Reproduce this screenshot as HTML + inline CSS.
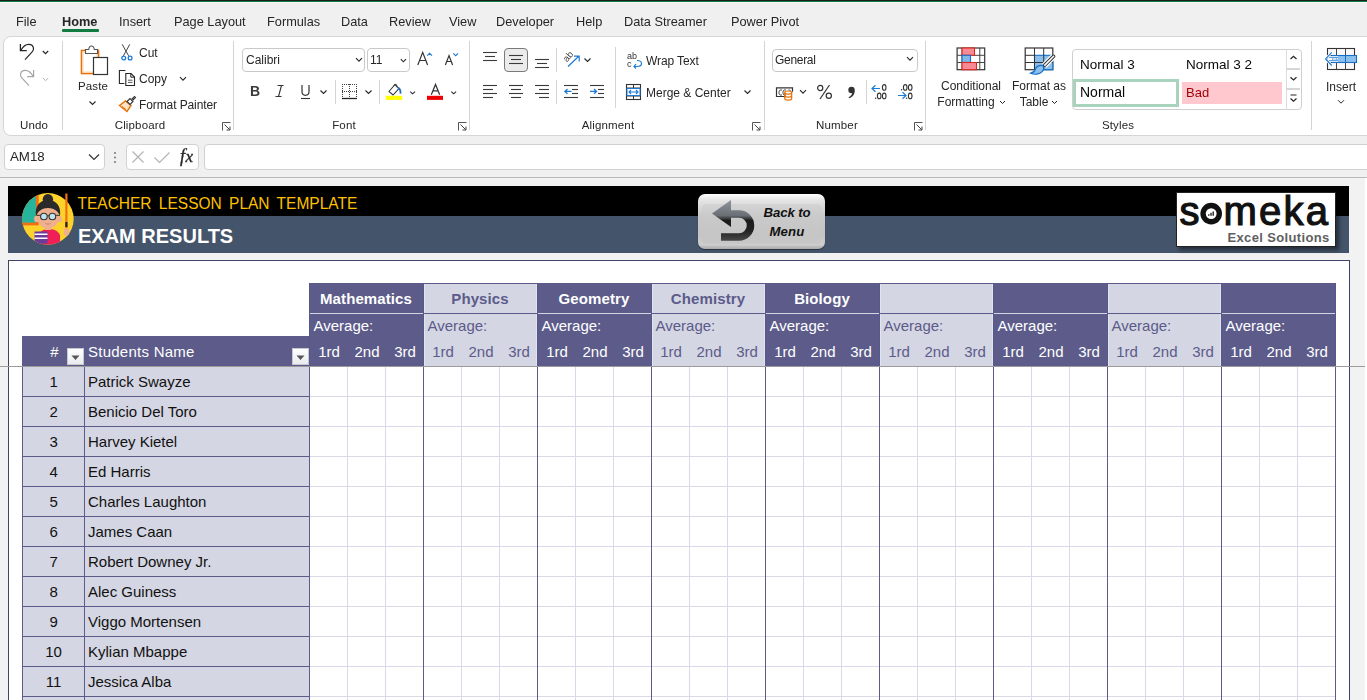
<!DOCTYPE html><html><head><meta charset="utf-8"><style>
html,body{margin:0;padding:0;}
body{width:1367px;height:700px;overflow:hidden;position:relative;background:#f0f0f0;font-family:"Liberation Sans",sans-serif;}
.t{position:absolute;white-space:nowrap;}
.r{position:absolute;}
.g{will-change:transform;}
</style></head><body>
<div class="r" style="left:0px;top:0px;width:1367px;height:1px;background:#1c1b20;"></div>
<div class="r" style="left:0px;top:1px;width:1367px;height:1px;background:#0f7b3e;"></div>
<div class="r" style="left:0px;top:2px;width:1367px;height:1px;background:#f9f6f9;"></div>
<div class="t g" style="left:16px;top:15.51px;font-size:12.75px;line-height:12.75px;color:#262626;">File</div>
<div class="t g" style="left:62px;top:15.51px;font-size:12.75px;line-height:12.75px;color:#262626;font-weight:bold;">Home</div>
<div class="t g" style="left:119px;top:15.51px;font-size:12.75px;line-height:12.75px;color:#262626;">Insert</div>
<div class="t g" style="left:174px;top:15.51px;font-size:12.75px;line-height:12.75px;color:#262626;">Page Layout</div>
<div class="t g" style="left:267px;top:15.51px;font-size:12.75px;line-height:12.75px;color:#262626;">Formulas</div>
<div class="t g" style="left:341px;top:15.51px;font-size:12.75px;line-height:12.75px;color:#262626;">Data</div>
<div class="t g" style="left:389px;top:15.51px;font-size:12.75px;line-height:12.75px;color:#262626;">Review</div>
<div class="t g" style="left:449px;top:15.51px;font-size:12.75px;line-height:12.75px;color:#262626;">View</div>
<div class="t g" style="left:496px;top:15.51px;font-size:12.75px;line-height:12.75px;color:#262626;">Developer</div>
<div class="t g" style="left:576px;top:15.51px;font-size:12.75px;line-height:12.75px;color:#262626;">Help</div>
<div class="t g" style="left:624px;top:15.51px;font-size:12.75px;line-height:12.75px;color:#262626;">Data Streamer</div>
<div class="t g" style="left:731px;top:15.51px;font-size:12.75px;line-height:12.75px;color:#262626;">Power Pivot</div>
<div class="r" style="left:62px;top:29px;width:37px;height:3px;background:#107c41;border-radius:1px;"></div>
<div class="r" style="left:3px;top:36px;width:1380px;height:100px;background:#ffffff;border:1px solid #d6d6d6;border-radius:8px;box-sizing:border-box;"></div>
<div class="r" style="left:62px;top:41px;width:1px;height:89px;background:#d4d4d4;"></div>
<div class="r" style="left:233px;top:41px;width:1px;height:89px;background:#d4d4d4;"></div>
<div class="r" style="left:469px;top:41px;width:1px;height:89px;background:#d4d4d4;"></div>
<div class="r" style="left:763.5px;top:41px;width:1px;height:89px;background:#d4d4d4;"></div>
<div class="r" style="left:925px;top:41px;width:1px;height:89px;background:#d4d4d4;"></div>
<div class="r" style="left:1311px;top:41px;width:1px;height:89px;background:#d4d4d4;"></div>
<div class="t g" style="left:34px;top:120.17px;font-size:11.5px;line-height:11.5px;color:#262626;letter-spacing:0.15px;width:120px;margin-left:-60.0px;text-align:center;">Undo</div>
<div class="t g" style="left:139.5px;top:120.17px;font-size:11.5px;line-height:11.5px;color:#262626;letter-spacing:0.15px;width:120px;margin-left:-60.0px;text-align:center;">Clipboard</div>
<div class="t g" style="left:343.5px;top:120.17px;font-size:11.5px;line-height:11.5px;color:#262626;letter-spacing:0.15px;width:120px;margin-left:-60.0px;text-align:center;">Font</div>
<div class="t g" style="left:608px;top:120.17px;font-size:11.5px;line-height:11.5px;color:#262626;letter-spacing:0.15px;width:120px;margin-left:-60.0px;text-align:center;">Alignment</div>
<div class="t g" style="left:836.5px;top:120.17px;font-size:11.5px;line-height:11.5px;color:#262626;letter-spacing:0.15px;width:120px;margin-left:-60.0px;text-align:center;">Number</div>
<div class="t g" style="left:1118px;top:120.17px;font-size:11.5px;line-height:11.5px;color:#262626;letter-spacing:0.15px;width:120px;margin-left:-60.0px;text-align:center;">Styles</div>
<svg class="r" style="left:222px;top:122px;" width="9" height="9" viewBox="0 0 9 9"><path d="M0.5 8.5V0.5H8.5" fill="none" stroke="#555" stroke-width="1"/><path d="M2.5 2.5L8 8M8 4.5V8H4.5" fill="none" stroke="#444" stroke-width="1"/></svg>
<svg class="r" style="left:458px;top:122px;" width="9" height="9" viewBox="0 0 9 9"><path d="M0.5 8.5V0.5H8.5" fill="none" stroke="#555" stroke-width="1"/><path d="M2.5 2.5L8 8M8 4.5V8H4.5" fill="none" stroke="#444" stroke-width="1"/></svg>
<svg class="r" style="left:752px;top:122px;" width="9" height="9" viewBox="0 0 9 9"><path d="M0.5 8.5V0.5H8.5" fill="none" stroke="#555" stroke-width="1"/><path d="M2.5 2.5L8 8M8 4.5V8H4.5" fill="none" stroke="#444" stroke-width="1"/></svg>
<svg class="r" style="left:914px;top:122px;" width="9" height="9" viewBox="0 0 9 9"><path d="M0.5 8.5V0.5H8.5" fill="none" stroke="#555" stroke-width="1"/><path d="M2.5 2.5L8 8M8 4.5V8H4.5" fill="none" stroke="#444" stroke-width="1"/></svg>
<svg class="r" style="left:18px;top:42px;" width="20" height="20" viewBox="0 0 20 20"><path d="M2.4 2v6.7h6.4" fill="none" stroke="#262626" stroke-width="1.3"/><path d="M2.8 8.4C5 4.5 7.5 2.3 10.5 2.3c3 0 5 2 5 4.6 0 1.8-1.2 3-2.5 4.3L7 17.6" fill="none" stroke="#262626" stroke-width="1.2"/></svg>
<svg class="r" style="left:42px;top:50px;" width="7" height="5" viewBox="0 0 7 5"><path d="M0.8 1l2.7 2.7L6.2 1" fill="none" stroke="#262626" stroke-width="1.2"/></svg>
<svg class="r" style="left:16px;top:68px;" width="20" height="20" viewBox="0 0 20 20"><path d="M17.6 2v6.7h-6.4" fill="none" stroke="#a6a6a6" stroke-width="1.2"/><path d="M17.2 8.4C15 4.5 12.5 2.3 9.5 2.3c-3 0-5 2-5 4.6 0 1.8 1.2 3 2.5 4.3L13 17.6" fill="none" stroke="#a6a6a6" stroke-width="1.2"/></svg>
<svg class="r" style="left:42px;top:77px;" width="7" height="5" viewBox="0 0 7 5"><path d="M0.8 1l2.7 2.7L6.2 1" fill="none" stroke="#b0b0b0" stroke-width="1"/></svg>
<svg class="r" style="left:80px;top:44px;" width="30" height="32" viewBox="0 0 30 32"><rect x="1.5" y="6.5" width="17" height="23" fill="#fff" stroke="#e8700a" stroke-width="1.6"/><rect x="3" y="8" width="14" height="20" fill="#fff" stroke="#fbd6a8" stroke-width="1"/><path d="M5.5 9.5V5.5h3.2c0.3-2.5 1.5-3.5 2.8-3.5s2.5 1 2.8 3.5h3.2v4z" fill="#fff" stroke="#555" stroke-width="1.1"/><rect x="13.5" y="13.5" width="14" height="17" fill="#fff" stroke="#333" stroke-width="1.2"/></svg>
<div class="t g" style="left:92.5px;top:81.07px;font-size:11.5px;line-height:11.5px;color:#262626;letter-spacing:0.1px;width:60px;margin-left:-30.0px;text-align:center;">Paste</div>
<svg class="r" style="left:88px;top:100px;" width="9" height="6" viewBox="0 0 9 6"><path d="M1.5 1.5l3 3 3-3" fill="none" stroke="#262626" stroke-width="1.1"/></svg>
<svg class="r" style="left:119px;top:43px;" width="16" height="18" viewBox="0 0 16 18"><path d="M3.2 1.3L9.6 12.8M10.8 1.3L4.4 12.8" fill="none" stroke="#444" stroke-width="1"/><circle cx="4.7" cy="15" r="1.9" fill="none" stroke="#1e7ad6" stroke-width="1.3"/><circle cx="11.1" cy="15" r="1.9" fill="none" stroke="#1e7ad6" stroke-width="1.3"/></svg>
<div class="t g" style="left:139px;top:46.84px;font-size:12px;line-height:12px;color:#262626;">Cut</div>
<svg class="r" style="left:118px;top:69px;" width="19" height="19" viewBox="0 0 19 19"><path d="M7.5 1.5H1.4V14.5h5" fill="none" stroke="#262626" stroke-width="1.1"/><path d="M7.8 4.5h5.2l3.5 3.5V16.5H7.8z" fill="#fff" stroke="#262626" stroke-width="1.1"/><path d="M12.8 4.5v3.7h3.7" fill="none" stroke="#262626" stroke-width="1"/><path d="M10 11.2h4.5M10 13.4h4.5" stroke="#444" stroke-width="0.9"/></svg>
<div class="t g" style="left:139px;top:73.14px;font-size:12px;line-height:12px;color:#262626;">Copy</div>
<svg class="r" style="left:179px;top:76px;" width="8" height="6" viewBox="0 0 8 6"><path d="M1 1.2l3 3 3-3" fill="none" stroke="#262626" stroke-width="1.1"/></svg>
<svg class="r" style="left:118px;top:95px;" width="19" height="18" viewBox="0 0 19 18"><path d="M1.5 10.5L9 16.5l4-6-5.5-4.5z" fill="#fde3c5" stroke="#e8700a" stroke-width="1.4"/><path d="M4 11.5l4 3" stroke="#e8700a" stroke-width="1"/><path d="M9 6.5l3-3 3 3-3 3z" fill="#fff" stroke="#333" stroke-width="1.1"/><path d="M13.5 4.5l3-3 1 1-3 3" fill="#fff" stroke="#333" stroke-width="1.1"/></svg>
<div class="t g" style="left:139px;top:99.04px;font-size:12px;line-height:12px;color:#262626;letter-spacing:-0.1px;">Format Painter</div>
<div class="r" style="left:242px;top:48px;width:123px;height:24px;background:#fff;border:1px solid #c9c9c9;border-radius:4px;box-sizing:border-box;"></div>
<div class="t g" style="left:245.5px;top:53.64px;font-size:12px;line-height:12px;color:#262626;">Calibri</div>
<svg class="r" style="left:355px;top:56.5px;" width="8" height="6" viewBox="0 0 8 6"><path d="M1 1.2l3 3 3-3" fill="none" stroke="#262626" stroke-width="1.1"/></svg>
<div class="r" style="left:367px;top:48px;width:43px;height:24px;background:#fff;border:1px solid #c9c9c9;border-radius:4px;box-sizing:border-box;"></div>
<div class="t g" style="left:370px;top:53.64px;font-size:12px;line-height:12px;color:#262626;">11</div>
<svg class="r" style="left:380px;top:40px;" width="90" height="66" viewBox="0 0 90 66"><path d="M400.8 59.2L403.4 61.8L406 59.2" fill="none" stroke="#262626" stroke-width="1.1" transform="translate(-380 -40)"/><path d="M417.8 65L422.7 52.3L427.6 65M419.6 60.5h6.2" fill="none" stroke="#333" stroke-width="1.2" transform="translate(-380 -40)"/><path d="M427.2 55.6L429.6 53.3L432 55.6" fill="none" stroke="#1e7ad6" stroke-width="1.1" transform="translate(-380 -40)"/><path d="M445.4 65L449 55.6L452.6 65M446.8 61.5h4.4" fill="none" stroke="#333" stroke-width="1.2" transform="translate(-380 -40)"/><path d="M453.3 53.4L455.7 55.7L458.1 53.4" fill="none" stroke="#1e7ad6" stroke-width="1.1" transform="translate(-380 -40)"/><path d="M389 91.5L395 84.5L399 88.5L393 95z" fill="#fff" stroke="#333" stroke-width="1.1" transform="translate(-380 -40)"/><path d="M393.8 85.8c0.5-1.3 1.8-1.8 2.6-1.2c0.6 0.5 0.4 1.6-0.3 2.6" fill="none" stroke="#333" stroke-width="1" transform="translate(-380 -40)"/><path d="M398 87.8c1.8 0.6 2.7 2.3 2.5 5.8" fill="none" stroke="#1e6bc0" stroke-width="1.8" transform="translate(-380 -40)"/><rect x="5.8" y="55.8" width="16.4" height="4.1" fill="#ffff00"/><path d="M410.2 91.6L412.6 93.8L415 91.6" fill="none" stroke="#262626" stroke-width="1.1" transform="translate(-380 -40)"/><path d="M431.3 94.7L435.5 84.4L439.7 94.7M432.8 90.8h5.4" fill="none" stroke="#333" stroke-width="1.2" transform="translate(-380 -40)"/><rect x="47" y="55.8" width="16" height="4.1" fill="#ee0000"/><path d="M451.3 91.6L453.7 93.8L456.1 91.6" fill="none" stroke="#262626" stroke-width="1.1" transform="translate(-380 -40)"/></svg>
<div class="t g" style="left:249.5px;top:84.45px;font-size:14px;line-height:14px;color:#3a3a3a;font-weight:bold;">B</div>
<svg class="r" style="left:274px;top:84px;" width="12" height="14" viewBox="0 0 12 14"><path d="M3.5 1.5h6M1.5 12.5h6M7.5 1.5l-3 11" fill="none" stroke="#333" stroke-width="1.1"/></svg>
<svg class="r" style="left:299px;top:83px;" width="13" height="18" viewBox="0 0 13 18"><path d="M3 2v6.5c0 2.4 1.5 3.8 3.5 3.8s3.5-1.4 3.5-3.8V2" fill="none" stroke="#333" stroke-width="1.2"/><path d="M2 15.5h9" stroke="#333" stroke-width="1.1"/></svg>
<svg class="r" style="left:319px;top:89px;" width="9" height="6" viewBox="0 0 9 6"><path d="M1.5 1.5l3 3 3-3" fill="none" stroke="#262626" stroke-width="1.1"/></svg>
<div class="r" style="left:335px;top:80px;width:1px;height:24px;background:#d4d4d4;"></div>
<svg class="r" style="left:341px;top:83px;" width="17" height="18" viewBox="0 0 17 18"><path d="M1 1.5h15M1 8.5h15M1.5 1v15M8.5 1v15M15.5 1v15" fill="none" stroke="#444" stroke-width="1" stroke-dasharray="1 1"/><path d="M1 15.5h15" stroke="#222" stroke-width="1.3"/></svg>
<svg class="r" style="left:364px;top:89px;" width="9" height="6" viewBox="0 0 9 6"><path d="M1.5 1.5l3 3 3-3" fill="none" stroke="#262626" stroke-width="1.1"/></svg>
<div class="r" style="left:379px;top:80px;width:1px;height:24px;background:#d4d4d4;"></div>
<div class="r" style="left:504px;top:48px;width:24px;height:24px;background:#ebebeb;border:1px solid #7a7a7a;border-radius:4px;box-sizing:border-box;"></div>
<svg class="r" style="left:475px;top:42px;" width="140" height="64" viewBox="0 0 140 64"><path d="M8 10.5H22" stroke="#3b3b3b" stroke-width="1.1"/><path d="M10 14.5H20" stroke="#3b3b3b" stroke-width="1.1"/><path d="M8 18.5H22" stroke="#3b3b3b" stroke-width="1.1"/><path d="M34 13.5H48" stroke="#3b3b3b" stroke-width="1.1"/><path d="M36 17.5H46" stroke="#3b3b3b" stroke-width="1.1"/><path d="M34 21.5H48" stroke="#3b3b3b" stroke-width="1.1"/><path d="M60 17.5H74" stroke="#3b3b3b" stroke-width="1.1"/><path d="M62 21.5H72" stroke="#3b3b3b" stroke-width="1.1"/><path d="M60 25.5H74" stroke="#3b3b3b" stroke-width="1.1"/><path d="M8 43.5H22" stroke="#3b3b3b" stroke-width="1.1"/><path d="M8 47.5H18" stroke="#3b3b3b" stroke-width="1.1"/><path d="M8 51.5H22" stroke="#3b3b3b" stroke-width="1.1"/><path d="M8 55.5H18" stroke="#3b3b3b" stroke-width="1.1"/><path d="M34 43.5H48" stroke="#3b3b3b" stroke-width="1.1"/><path d="M36 47.5H46" stroke="#3b3b3b" stroke-width="1.1"/><path d="M34 51.5H48" stroke="#3b3b3b" stroke-width="1.1"/><path d="M36 55.5H46" stroke="#3b3b3b" stroke-width="1.1"/><path d="M60 43.5H74" stroke="#3b3b3b" stroke-width="1.1"/><path d="M64 47.5H74" stroke="#3b3b3b" stroke-width="1.1"/><path d="M60 51.5H74" stroke="#3b3b3b" stroke-width="1.1"/><path d="M64 55.5H74" stroke="#3b3b3b" stroke-width="1.1"/><path d="M89 43.5H103" stroke="#3b3b3b" stroke-width="1.1"/><path d="M97 47.5H103" stroke="#3b3b3b" stroke-width="1.1"/><path d="M97 51.5H103" stroke="#3b3b3b" stroke-width="1.1"/><path d="M89 55.5H103" stroke="#3b3b3b" stroke-width="1.1"/><path d="M115 43.5H129" stroke="#3b3b3b" stroke-width="1.1"/><path d="M123 47.5H129" stroke="#3b3b3b" stroke-width="1.1"/><path d="M123 51.5H129" stroke="#3b3b3b" stroke-width="1.1"/><path d="M115 55.5H129" stroke="#3b3b3b" stroke-width="1.1"/><path d="M90 49.4h6.5M92.5 47l-2.6 2.4 2.6 2.4" fill="none" stroke="#1e7ad6" stroke-width="1.3"/><path d="M115 49.4h6.5M119 47l2.6 2.4-2.6 2.4" fill="none" stroke="#1e7ad6" stroke-width="1.3"/><text x="0" y="0" font-size="9.5" font-family="Liberation Sans" fill="#3b3b3b" transform="translate(92 20.5) rotate(-50)">ab</text><path d="M93 24.5L104 14M99 14.2h5.2v5.2" fill="none" stroke="#1e7ad6" stroke-width="1.2"/></svg>
<svg class="r" style="left:583px;top:57px;" width="9" height="6" viewBox="0 0 9 6"><path d="M1.5 1.5l3 3 3-3" fill="none" stroke="#262626" stroke-width="1.1"/></svg>
<div class="r" style="left:556px;top:48px;width:1px;height:24px;background:#d4d4d4;"></div>
<div class="r" style="left:556px;top:80px;width:1px;height:24px;background:#d4d4d4;"></div>
<div class="r" style="left:615px;top:47px;width:1px;height:61px;background:#d4d4d4;"></div>
<svg class="r" style="left:626px;top:51px;" width="18" height="18" viewBox="0 0 18 18"><text x="1" y="8" font-size="9" font-family="Liberation Sans" fill="#333">ab</text><text x="1" y="16" font-size="9" font-family="Liberation Sans" fill="#333">c</text><path d="M11 9.5c3 0 4.5 1 4.5 3s-1.5 3-4.5 3H8M10 13l-2 2.5 2 2" fill="none" stroke="#1e7ad6" stroke-width="1.2"/></svg>
<div class="t g" style="left:646px;top:55.14px;font-size:12px;line-height:12px;color:#262626;letter-spacing:-0.1px;">Wrap Text</div>
<svg class="r" style="left:625px;top:83px;" width="18" height="18" viewBox="0 0 18 18"><rect x="1.5" y="1.5" width="14" height="15" fill="#fff" stroke="#333" stroke-width="1.1"/><path d="M1.5 5h14M1.5 13h14" stroke="#333" stroke-width="1"/><path d="M8.5 1.5v3.5M8.5 13v3.5" stroke="#333" stroke-width="1"/><rect x="2" y="5.5" width="13" height="7" fill="#fff" stroke="#1e7ad6" stroke-width="1"/><path d="M4 9h9M6 7l-2 2 2 2M11 7l2 2-2 2" fill="none" stroke="#1e7ad6" stroke-width="1.1"/></svg>
<div class="t g" style="left:646px;top:86.64px;font-size:12px;line-height:12px;color:#262626;letter-spacing:0px;">Merge &amp; Center</div>
<svg class="r" style="left:743px;top:89px;" width="9" height="6" viewBox="0 0 9 6"><path d="M1.5 1.5l3 3 3-3" fill="none" stroke="#262626" stroke-width="1.1"/></svg>
<div class="r" style="left:772px;top:48.5px;width:146px;height:23px;background:#fff;border:1px solid #c9c9c9;border-radius:4px;box-sizing:border-box;"></div>
<div class="t g" style="left:775px;top:53.74px;font-size:12px;line-height:12px;color:#262626;letter-spacing:-0.3px;">General</div>
<svg class="r" style="left:906px;top:56px;" width="8" height="6" viewBox="0 0 8 6"><path d="M1 1.2l3 3 3-3" fill="none" stroke="#262626" stroke-width="1.1"/></svg>
<svg class="r" style="left:774px;top:84px;" width="22" height="18" viewBox="0 0 22 18"><path d="M11 12.5H2.5V3.8h16v4" fill="none" stroke="#333" stroke-width="1.2"/><path d="M8 6.2c-1-0.6-3-0.5-3 2.3s2 2.9 3 2.3M12 6.2c-1-0.6-3-0.5-3 2.3s2 2.9 3 2.3" fill="none" stroke="#333" stroke-width="1"/><path d="M14.5 6c1 0 2 0.3 2 1" fill="none" stroke="#333" stroke-width="0.9"/><ellipse cx="14.2" cy="8.6" rx="3.5" ry="1.6" fill="#fff" stroke="#e8700a" stroke-width="1.2"/><path d="M10.7 8.6v5.9c0 0.9 1.6 1.6 3.5 1.6s3.5-0.7 3.5-1.6V8.6M10.7 11.5c0 0.9 1.6 1.6 3.5 1.6s3.5-0.7 3.5-1.6" fill="none" stroke="#e8700a" stroke-width="1.2"/></svg>
<svg class="r" style="left:799px;top:89px;" width="9" height="6" viewBox="0 0 9 6"><path d="M1 1.2l3 3 3-3" fill="none" stroke="#262626" stroke-width="1.1"/></svg>
<svg class="r" style="left:816px;top:84px;" width="18" height="16" viewBox="0 0 18 16"><circle cx="4.2" cy="4" r="2.6" fill="none" stroke="#333" stroke-width="1.2"/><circle cx="12.8" cy="11.8" r="2.6" fill="none" stroke="#333" stroke-width="1.2"/><path d="M13.5 1L4 15" stroke="#333" stroke-width="1.2"/></svg>
<svg class="r" style="left:845px;top:85px;" width="12" height="15" viewBox="0 0 12 15"><circle cx="6.5" cy="5" r="3.2" fill="#333"/><path d="M9.6 5.5c0.3 3.5-1.8 6.5-5.5 7.8l-0.5-1c2.5-1.2 3.8-3.3 3.8-5.5z" fill="#333"/></svg>
<div class="r" style="left:865.5px;top:80px;width:1px;height:24px;background:#d4d4d4;"></div>
<svg class="r" style="left:869px;top:84px;" width="21" height="18" viewBox="0 0 21 18"><path d="M3 4.5h8M6.5 1.3L3 4.5l3.5 3.2" fill="none" stroke="#1e7ad6" stroke-width="1.2"/><ellipse cx="15.2" cy="3.4" rx="1.8" ry="2.8" fill="none" stroke="#333" stroke-width="1.1"/><circle cx="6.6" cy="14.2" r="0.75" fill="#333"/><ellipse cx="10.2" cy="11.9" rx="1.8" ry="2.8" fill="none" stroke="#333" stroke-width="1.1"/><ellipse cx="15.2" cy="11.9" rx="1.8" ry="2.8" fill="none" stroke="#333" stroke-width="1.1"/></svg>
<svg class="r" style="left:895px;top:84px;" width="21" height="18" viewBox="0 0 21 18"><circle cx="6.6" cy="5.7" r="0.75" fill="#333"/><ellipse cx="10.2" cy="3.4" rx="1.8" ry="2.8" fill="none" stroke="#333" stroke-width="1.1"/><ellipse cx="15.2" cy="3.4" rx="1.8" ry="2.8" fill="none" stroke="#333" stroke-width="1.1"/><path d="M3 11.5h8M7.5 8.3L11 11.5l-3.5 3.2" fill="none" stroke="#1e7ad6" stroke-width="1.2"/><circle cx="11.6" cy="14.2" r="0.75" fill="#333"/><ellipse cx="15.2" cy="11.9" rx="1.8" ry="2.8" fill="none" stroke="#333" stroke-width="1.1"/></svg>
<svg class="r" style="left:956px;top:47px;" width="30" height="26" viewBox="0 0 30 26"><rect x="1.1" y="1" width="27.6" height="21.7" fill="#fff" stroke="#333" stroke-width="1.2"/><path d="M1.1 8.3h27.6M1.1 15.5h27.6M23.8 1v21.7M6 1v21.7" fill="none" stroke="#444" stroke-width="1"/><rect x="6" y="1" width="12.5" height="7.3" fill="#f78b95" stroke="#e0261b" stroke-width="1.1"/><rect x="6" y="8.3" width="8.5" height="7.2" fill="#82b8e8" stroke="#1670c9" stroke-width="1.1"/><rect x="6" y="15.5" width="14.5" height="7.2" fill="#f78b95" stroke="#e0261b" stroke-width="1.1"/></svg>
<div class="t g" style="left:971px;top:79.84px;font-size:12px;line-height:12px;color:#262626;width:80px;margin-left:-40.0px;text-align:center;">Conditional</div>
<div class="t g" style="left:966px;top:96.04px;font-size:12px;line-height:12px;color:#262626;width:80px;margin-left:-40.0px;text-align:center;">Formatting</div>
<svg class="r" style="left:998.5px;top:99.5px;" width="7" height="5" viewBox="0 0 7 5"><path d="M1 1l2.5 2.5L6 1" fill="none" stroke="#262626" stroke-width="1"/></svg>
<svg class="r" style="left:1024px;top:47px;" width="34" height="33" viewBox="0 0 34 33"><rect x="1.2" y="1" width="27.6" height="21.7" fill="#fff" stroke="#333" stroke-width="1.2"/><rect x="10.5" y="8.3" width="18.3" height="14.4" fill="#8cc0ec" stroke="#1670c9" stroke-width="1.1"/><path d="M1.2 8.3h9.3M1.2 15.5h27.6M10.5 1v21.7M19.7 1v21.7" fill="none" stroke="#333" stroke-width="1"/><path d="M20.3 18.6L29.6 9.3" stroke="#fff" stroke-width="6"/><path d="M20.8 18.1L29.6 9.3" stroke="#333" stroke-width="3.6" stroke-linecap="round"/><path d="M20.8 18.1L29.6 9.3" stroke="#fff" stroke-width="1.6" stroke-linecap="round"/><path d="M19.2 19c-3 -1.5 -7 0 -8 3.5c-0.6 2 -2.5 3.3 -4.5 3.7c3.5 1.8 9 1.2 11.5 -1.5c1.5 -1.6 2 -3.7 1 -5.7z" fill="#8cc0ec" stroke="#1670c9" stroke-width="1.2"/></svg>
<div class="t g" style="left:1039px;top:79.84px;font-size:12px;line-height:12px;color:#262626;width:80px;margin-left:-40.0px;text-align:center;">Format as</div>
<div class="t g" style="left:1033.5px;top:96.04px;font-size:12px;line-height:12px;color:#262626;width:60px;margin-left:-30.0px;text-align:center;">Table</div>
<svg class="r" style="left:1050.5px;top:99.5px;" width="7" height="5" viewBox="0 0 7 5"><path d="M1 1l2.5 2.5L6 1" fill="none" stroke="#262626" stroke-width="1"/></svg>
<div class="r" style="left:1071.5px;top:48.5px;width:230px;height:61px;background:#fff;border:1px solid #cfcfcf;border-radius:4px;box-sizing:border-box;"></div>
<div class="r" style="left:1286px;top:48.5px;width:15.5px;height:61px;border-left:1px solid #dcdcdc;box-sizing:border-box;"></div>
<div class="r" style="left:1286px;top:68px;width:14px;height:2px;background:#d6d6d6;"></div>
<div class="r" style="left:1286px;top:88px;width:14px;height:2px;background:#d6d6d6;"></div>
<svg class="r" style="left:1289px;top:55px;" width="9" height="6" viewBox="0 0 9 6"><path d="M1.5 4l3-2.8 3 2.8" fill="none" stroke="#262626" stroke-width="1.2"/></svg>
<svg class="r" style="left:1289px;top:76px;" width="9" height="6" viewBox="0 0 9 6"><path d="M1.5 1.2l3 2.8 3-2.8" fill="none" stroke="#262626" stroke-width="1.2"/></svg>
<svg class="r" style="left:1289px;top:94px;" width="9" height="10" viewBox="0 0 9 10"><path d="M1.5 1h6M1.5 4.5l3 2.8 3-2.8" fill="none" stroke="#262626" stroke-width="1.2"/></svg>
<div class="t g" style="left:1080px;top:58.07px;font-size:13.5px;line-height:13.5px;color:#0a0a0a;">Normal 3</div>
<div class="t g" style="left:1186px;top:58.07px;font-size:13.5px;line-height:13.5px;color:#0a0a0a;">Normal 3 2</div>
<div class="r" style="left:1073px;top:79px;width:106px;height:27.5px;border:3px solid #a9d3bd;box-sizing:border-box;background:#fff;"></div>
<div class="t g" style="left:1080px;top:85.45px;font-size:14px;line-height:14px;color:#0a0a0a;">Normal</div>
<div class="r" style="left:1182px;top:82px;width:100px;height:21.5px;background:#ffc7ce;"></div>
<div class="t g" style="left:1186px;top:86.30px;font-size:13px;line-height:13px;color:#9c0006;">Bad</div>
<svg class="r" style="left:1320px;top:44px;" width="40" height="30" viewBox="0 0 40 30"><g transform="translate(-1320 -44)"><rect x="1327.5" y="48.5" width="27" height="21" fill="#fafafa" stroke="#333" stroke-width="1.1"/><path d="M1336.5 48.5v21M1345.5 48.5v21M1327.5 55.5h27M1327.5 62.5h27" stroke="#444" stroke-width="1"/><rect x="1332.5" y="55.5" width="24" height="7" fill="#8cc0ec" stroke="#1670c9" stroke-width="1.1"/><path d="M1336.5 55.5v7M1345.5 55.5v7" stroke="#1670c9" stroke-width="1"/><path d="M1338 57.3h-9.5M1338 60.7h-9.5" stroke="#fff" stroke-width="2.4"/><path d="M1338 57.3h-9.5M1338 60.7h-9.5" stroke="#1e7ad6" stroke-width="0.9"/><path d="M1331.8 52.3L1325.6 58.9L1331.8 65.5" fill="none" stroke="#fff" stroke-width="2.6"/><path d="M1331.8 52.3L1325.6 58.9L1331.8 65.5" fill="none" stroke="#1e7ad6" stroke-width="1.2"/></g></svg>
<div class="t g" style="left:1340.5px;top:80.54px;font-size:12px;line-height:12px;color:#262626;width:60px;margin-left:-30.0px;text-align:center;">Insert</div>
<svg class="r" style="left:1337px;top:99px;" width="8" height="6" viewBox="0 0 8 6"><path d="M1 1.2l3 3 3-3" fill="none" stroke="#262626" stroke-width="1"/></svg>
<div class="r" style="left:3.5px;top:144px;width:101.5px;height:26px;background:#fff;border:1px solid #d1d1d1;border-radius:4px;box-sizing:border-box;"></div>
<div class="t g" style="left:10px;top:150.24px;font-size:13.3px;line-height:13.3px;color:#262626;">AM18</div>
<svg class="r" style="left:88px;top:153px;" width="12" height="8" viewBox="0 0 12 8"><path d="M1 1.5l5 5 5-5" fill="none" stroke="#333" stroke-width="1.2"/></svg>
<svg class="r" style="left:113px;top:151px;" width="4" height="13" viewBox="0 0 4 13"><circle cx="2" cy="2" r="1" fill="#777"/><circle cx="2" cy="6.5" r="1" fill="#777"/><circle cx="2" cy="11" r="1" fill="#777"/></svg>
<div class="r" style="left:125.5px;top:144px;width:73.5px;height:26px;background:#fff;border:1px solid #d1d1d1;border-radius:4px;box-sizing:border-box;"></div>
<svg class="r" style="left:131px;top:150px;" width="14" height="14" viewBox="0 0 14 14"><path d="M1.5 1.5l11 11M12.5 1.5l-11 11" stroke="#b3b3b3" stroke-width="1.2"/></svg>
<svg class="r" style="left:153px;top:150px;" width="18" height="14" viewBox="0 0 18 14"><path d="M1.5 7.5l5 5 10-10" fill="none" stroke="#b3b3b3" stroke-width="1.2"/></svg>
<div class="t g" style="left:179.5px;top:146.56px;font-size:18px;line-height:18px;color:#262626;font-family:&quot;Liberation Serif&quot;,serif;-webkit-text-stroke:0.35px #262626;"><i>f</i><i style="font-size:17px;margin-left:0.5px">x</i></div>
<div class="r" style="left:203.5px;top:144px;width:1180px;height:26px;background:#fff;border:1px solid #d1d1d1;border-radius:4px;box-sizing:border-box;"></div>
<div class="r" style="left:0px;top:178px;width:1367px;height:522px;background:#f2f2f2;"></div>
<div class="r" style="left:0px;top:177px;width:1367px;height:1px;background:#b9b9b9;"></div>
<div class="r" style="left:8px;top:186px;width:1341px;height:30px;background:#000;"></div>
<div class="r" style="left:8px;top:216px;width:1341px;height:36.5px;background:#44546a;"></div>
<svg class="r" style="left:20px;top:191px;" width="56" height="56" viewBox="0 0 56 56"><defs><clipPath id="cc"><circle cx="27.9" cy="27.8" r="25.8"/></clipPath></defs><circle cx="27.9" cy="27.8" r="25.8" fill="#fdd22b"/><g clip-path="url(#cc)"><rect x="0" y="0" width="18.7" height="34.4" fill="#f36f13"/><rect x="0" y="0" width="15.9" height="31.6" fill="#26b59c"/><path d="M19 44c1-4 5-6 10-6s9 2 11 6v14H19z" fill="#ef1f57"/><rect x="25" y="34" width="6" height="5" fill="#eeb08e"/><path d="M14.5 40.5h13v12h-13z" fill="#6a3c9a"/><path d="M14.5 43.3h13M14.5 47.2h13" stroke="#fff" stroke-width="1.5"/></g><rect x="45.3" y="2.5" width="2.2" height="35" fill="#f36f13"/><rect x="45.3" y="31" width="2.2" height="5" fill="#222"/><ellipse cx="46.5" cy="41" rx="2.8" ry="3.8" fill="#eeb08e"/><circle cx="27.9" cy="8.3" r="5.2" fill="#2a2a2a"/><ellipse cx="28" cy="26" rx="11" ry="11.5" fill="#eeb08e"/><ellipse cx="16.5" cy="28" rx="2.4" ry="3.2" fill="#eeb08e"/><ellipse cx="39.5" cy="28" rx="2.4" ry="3.2" fill="#eeb08e"/><path d="M16 25c-1.5-10 4-16 12-16s13.5 6 12 16c-2-5-6-8-12-8s-10 3-12 8z" fill="#2a2a2a"/><circle cx="23.9" cy="25.5" r="3.3" fill="#bfe4f0" stroke="#333" stroke-width="1.1"/><circle cx="32.4" cy="25.5" r="3.3" fill="#bfe4f0" stroke="#333" stroke-width="1.1"/><path d="M16.5 24.3h4.2M27.2 24.8h1.9M35.7 24.3h4.2" stroke="#333" stroke-width="1"/><path d="M25.5 32.5c1.5 0.8 3.5 0.8 5 0" fill="none" stroke="#c47a5a" stroke-width="0.8"/></svg>
<div class="t" style="left:77.5px;top:195.78px;font-size:15.5px;line-height:15.5px;color:#ffc000;word-spacing:3px;transform:scaleY(1.1);transform-origin:0 13.12px;">TEACHER LESSON PLAN TEMPLATE</div>
<div class="t" style="left:78px;top:226.07px;font-size:20px;line-height:20px;color:#ffffff;font-weight:bold;letter-spacing:0px;">EXAM RESULTS</div>
<div class="r" style="left:698px;top:194px;width:127px;height:55px;border-radius:7px;background:linear-gradient(180deg,#ffffff 0%,#e4e4e4 12%,#c9c9c9 40%,#c4c4c4 75%,#cfcfcf 92%,#a9a9a9 100%);box-shadow:0 1px 1px rgba(0,0,0,0.4);"></div>
<div class="r" style="left:702px;top:204px;width:119px;height:40px;border-radius:4px;background:linear-gradient(180deg,#cdcdcd,#c3c3c3);opacity:0.6"></div>
<svg class="r" style="left:700px;top:195px;" width="60" height="52" viewBox="0 0 60 52"><defs><linearGradient id="ag" gradientUnits="userSpaceOnUse" x1="0" y1="5" x2="0" y2="46"><stop offset="0" stop-color="#8f949c"/><stop offset="0.38" stop-color="#6a6e75"/><stop offset="0.5" stop-color="#1a1a1a"/><stop offset="0.75" stop-color="#222"/><stop offset="1" stop-color="#4a4a4a"/></linearGradient></defs><path d="M12 18.5L31 5v27z" fill="url(#ag)"/><path d="M29 19H39A11.5 11.5 0 0 1 39 42H21" fill="none" stroke="url(#ag)" stroke-width="7.5"/></svg>
<div class="t" style="left:787px;top:206.33px;font-size:13.2px;line-height:13.2px;color:#111;font-weight:bold;font-style:italic;letter-spacing:-0.1px;width:80px;margin-left:-40.0px;text-align:center;">Back to</div>
<div class="t" style="left:787px;top:224.63px;font-size:13.2px;line-height:13.2px;color:#111;font-weight:bold;font-style:italic;letter-spacing:0.2px;width:80px;margin-left:-40.0px;text-align:center;">Menu</div>
<div class="r" style="left:1175.5px;top:191.5px;width:160px;height:55px;background:#fff;border:1px solid #222;box-sizing:border-box;box-shadow:3px 3px 4px rgba(0,0,0,0.45);"></div>
<div class="t" style="left:1179.5px;top:191.14px;font-size:40px;line-height:40px;color:#111;-webkit-text-stroke:1.2px #111;">s</div>
<svg class="r" style="left:1199px;top:201px;" width="25" height="25" viewBox="0 0 25 25"><circle cx="12.2" cy="12.6" r="10.8" fill="#111"/><circle cx="12.2" cy="12.6" r="5.4" fill="#fff"/><path d="M9.8 14.8v-1.6M12 14.8v-3M14.2 14.8v-4.4" stroke="#111" stroke-width="1.3"/></svg>
<div class="t" style="left:1223.5px;top:191.14px;font-size:40px;line-height:40px;color:#111;letter-spacing:2.2px;-webkit-text-stroke:1.2px #111;">meka</div>
<div class="t" style="left:1227.5px;top:230.80px;font-size:13px;line-height:13px;color:#606060;font-weight:bold;letter-spacing:0.35px;">Excel Solutions</div>
<div class="r" style="left:8px;top:259.5px;width:1342px;height:460px;background:#fff;border:1px solid #3f4466;box-sizing:border-box;"></div>
<div class="r" style="left:309px;top:283px;width:114px;height:83px;background:#5c5b8a;"></div>
<div class="r" style="left:310px;top:313px;width:113px;height:1px;background:#d4d6e3;"></div>
<div class="r" style="left:309px;top:283px;width:1px;height:83px;background:#56578a;"></div>
<div class="t" style="left:366px;top:291.10px;font-size:15px;line-height:15px;color:#ffffff;font-weight:bold;letter-spacing:0.1px;width:114px;margin-left:-57.0px;text-align:center;">Mathematics</div>
<div class="t" style="left:313.5px;top:318.10px;font-size:15px;line-height:15px;color:#ffffff;">Average:</div>
<div class="t" style="left:329px;top:344.00px;font-size:15px;line-height:15px;color:#ffffff;width:38px;margin-left:-19.0px;text-align:center;">1rd</div>
<div class="t" style="left:367px;top:344.00px;font-size:15px;line-height:15px;color:#ffffff;width:38px;margin-left:-19.0px;text-align:center;">2nd</div>
<div class="t" style="left:405px;top:344.00px;font-size:15px;line-height:15px;color:#ffffff;width:38px;margin-left:-19.0px;text-align:center;">3rd</div>
<div class="r" style="left:423px;top:283px;width:114px;height:83px;background:#d4d6e3;"></div>
<div class="r" style="left:423px;top:283px;width:114px;height:1px;background:#5c5b8a;"></div>
<div class="r" style="left:424px;top:284px;width:1px;height:82px;background:#e3e3ee;"></div>
<div class="r" style="left:536px;top:284px;width:1px;height:82px;background:#e3e3ee;"></div>
<div class="r" style="left:423px;top:313px;width:114px;height:1px;background:#5c5b8a;"></div>
<div class="r" style="left:423px;top:283px;width:1px;height:83px;background:#56578a;"></div>
<div class="t" style="left:480px;top:291.10px;font-size:15px;line-height:15px;color:#5c5b8a;font-weight:bold;letter-spacing:0.1px;width:114px;margin-left:-57.0px;text-align:center;">Physics</div>
<div class="t" style="left:427.5px;top:318.10px;font-size:15px;line-height:15px;color:#5c5b8a;">Average:</div>
<div class="t" style="left:443px;top:344.00px;font-size:15px;line-height:15px;color:#5c5b8a;width:38px;margin-left:-19.0px;text-align:center;">1rd</div>
<div class="t" style="left:481px;top:344.00px;font-size:15px;line-height:15px;color:#5c5b8a;width:38px;margin-left:-19.0px;text-align:center;">2nd</div>
<div class="t" style="left:519px;top:344.00px;font-size:15px;line-height:15px;color:#5c5b8a;width:38px;margin-left:-19.0px;text-align:center;">3rd</div>
<div class="r" style="left:537px;top:283px;width:114px;height:83px;background:#5c5b8a;"></div>
<div class="r" style="left:538px;top:313px;width:113px;height:1px;background:#d4d6e3;"></div>
<div class="r" style="left:537px;top:283px;width:1px;height:83px;background:#56578a;"></div>
<div class="t" style="left:594px;top:291.10px;font-size:15px;line-height:15px;color:#ffffff;font-weight:bold;letter-spacing:0.1px;width:114px;margin-left:-57.0px;text-align:center;">Geometry</div>
<div class="t" style="left:541.5px;top:318.10px;font-size:15px;line-height:15px;color:#ffffff;">Average:</div>
<div class="t" style="left:557px;top:344.00px;font-size:15px;line-height:15px;color:#ffffff;width:38px;margin-left:-19.0px;text-align:center;">1rd</div>
<div class="t" style="left:595px;top:344.00px;font-size:15px;line-height:15px;color:#ffffff;width:38px;margin-left:-19.0px;text-align:center;">2nd</div>
<div class="t" style="left:633px;top:344.00px;font-size:15px;line-height:15px;color:#ffffff;width:38px;margin-left:-19.0px;text-align:center;">3rd</div>
<div class="r" style="left:651px;top:283px;width:114px;height:83px;background:#d4d6e3;"></div>
<div class="r" style="left:651px;top:283px;width:114px;height:1px;background:#5c5b8a;"></div>
<div class="r" style="left:652px;top:284px;width:1px;height:82px;background:#e3e3ee;"></div>
<div class="r" style="left:764px;top:284px;width:1px;height:82px;background:#e3e3ee;"></div>
<div class="r" style="left:651px;top:313px;width:114px;height:1px;background:#5c5b8a;"></div>
<div class="r" style="left:651px;top:283px;width:1px;height:83px;background:#56578a;"></div>
<div class="t" style="left:708px;top:291.10px;font-size:15px;line-height:15px;color:#5c5b8a;font-weight:bold;letter-spacing:0.1px;width:114px;margin-left:-57.0px;text-align:center;">Chemistry</div>
<div class="t" style="left:655.5px;top:318.10px;font-size:15px;line-height:15px;color:#5c5b8a;">Average:</div>
<div class="t" style="left:671px;top:344.00px;font-size:15px;line-height:15px;color:#5c5b8a;width:38px;margin-left:-19.0px;text-align:center;">1rd</div>
<div class="t" style="left:709px;top:344.00px;font-size:15px;line-height:15px;color:#5c5b8a;width:38px;margin-left:-19.0px;text-align:center;">2nd</div>
<div class="t" style="left:747px;top:344.00px;font-size:15px;line-height:15px;color:#5c5b8a;width:38px;margin-left:-19.0px;text-align:center;">3rd</div>
<div class="r" style="left:765px;top:283px;width:114px;height:83px;background:#5c5b8a;"></div>
<div class="r" style="left:766px;top:313px;width:113px;height:1px;background:#d4d6e3;"></div>
<div class="r" style="left:765px;top:283px;width:1px;height:83px;background:#56578a;"></div>
<div class="t" style="left:822px;top:291.10px;font-size:15px;line-height:15px;color:#ffffff;font-weight:bold;letter-spacing:0.1px;width:114px;margin-left:-57.0px;text-align:center;">Biology</div>
<div class="t" style="left:769.5px;top:318.10px;font-size:15px;line-height:15px;color:#ffffff;">Average:</div>
<div class="t" style="left:785px;top:344.00px;font-size:15px;line-height:15px;color:#ffffff;width:38px;margin-left:-19.0px;text-align:center;">1rd</div>
<div class="t" style="left:823px;top:344.00px;font-size:15px;line-height:15px;color:#ffffff;width:38px;margin-left:-19.0px;text-align:center;">2nd</div>
<div class="t" style="left:861px;top:344.00px;font-size:15px;line-height:15px;color:#ffffff;width:38px;margin-left:-19.0px;text-align:center;">3rd</div>
<div class="r" style="left:879px;top:283px;width:114px;height:83px;background:#d4d6e3;"></div>
<div class="r" style="left:879px;top:283px;width:114px;height:1px;background:#5c5b8a;"></div>
<div class="r" style="left:880px;top:284px;width:1px;height:82px;background:#e3e3ee;"></div>
<div class="r" style="left:992px;top:284px;width:1px;height:82px;background:#e3e3ee;"></div>
<div class="r" style="left:879px;top:313px;width:114px;height:1px;background:#5c5b8a;"></div>
<div class="r" style="left:879px;top:283px;width:1px;height:83px;background:#56578a;"></div>
<div class="t" style="left:883.5px;top:318.10px;font-size:15px;line-height:15px;color:#5c5b8a;">Average:</div>
<div class="t" style="left:899px;top:344.00px;font-size:15px;line-height:15px;color:#5c5b8a;width:38px;margin-left:-19.0px;text-align:center;">1rd</div>
<div class="t" style="left:937px;top:344.00px;font-size:15px;line-height:15px;color:#5c5b8a;width:38px;margin-left:-19.0px;text-align:center;">2nd</div>
<div class="t" style="left:975px;top:344.00px;font-size:15px;line-height:15px;color:#5c5b8a;width:38px;margin-left:-19.0px;text-align:center;">3rd</div>
<div class="r" style="left:993px;top:283px;width:114px;height:83px;background:#5c5b8a;"></div>
<div class="r" style="left:994px;top:313px;width:113px;height:1px;background:#d4d6e3;"></div>
<div class="r" style="left:993px;top:283px;width:1px;height:83px;background:#56578a;"></div>
<div class="t" style="left:997.5px;top:318.10px;font-size:15px;line-height:15px;color:#ffffff;">Average:</div>
<div class="t" style="left:1013px;top:344.00px;font-size:15px;line-height:15px;color:#ffffff;width:38px;margin-left:-19.0px;text-align:center;">1rd</div>
<div class="t" style="left:1051px;top:344.00px;font-size:15px;line-height:15px;color:#ffffff;width:38px;margin-left:-19.0px;text-align:center;">2nd</div>
<div class="t" style="left:1089px;top:344.00px;font-size:15px;line-height:15px;color:#ffffff;width:38px;margin-left:-19.0px;text-align:center;">3rd</div>
<div class="r" style="left:1107px;top:283px;width:114px;height:83px;background:#d4d6e3;"></div>
<div class="r" style="left:1107px;top:283px;width:114px;height:1px;background:#5c5b8a;"></div>
<div class="r" style="left:1108px;top:284px;width:1px;height:82px;background:#e3e3ee;"></div>
<div class="r" style="left:1220px;top:284px;width:1px;height:82px;background:#e3e3ee;"></div>
<div class="r" style="left:1107px;top:313px;width:114px;height:1px;background:#5c5b8a;"></div>
<div class="r" style="left:1107px;top:283px;width:1px;height:83px;background:#56578a;"></div>
<div class="t" style="left:1111.5px;top:318.10px;font-size:15px;line-height:15px;color:#5c5b8a;">Average:</div>
<div class="t" style="left:1127px;top:344.00px;font-size:15px;line-height:15px;color:#5c5b8a;width:38px;margin-left:-19.0px;text-align:center;">1rd</div>
<div class="t" style="left:1165px;top:344.00px;font-size:15px;line-height:15px;color:#5c5b8a;width:38px;margin-left:-19.0px;text-align:center;">2nd</div>
<div class="t" style="left:1203px;top:344.00px;font-size:15px;line-height:15px;color:#5c5b8a;width:38px;margin-left:-19.0px;text-align:center;">3rd</div>
<div class="r" style="left:1221px;top:283px;width:114px;height:83px;background:#5c5b8a;"></div>
<div class="r" style="left:1222px;top:313px;width:113px;height:1px;background:#d4d6e3;"></div>
<div class="r" style="left:1221px;top:283px;width:1px;height:83px;background:#56578a;"></div>
<div class="t" style="left:1225.5px;top:318.10px;font-size:15px;line-height:15px;color:#ffffff;">Average:</div>
<div class="t" style="left:1241px;top:344.00px;font-size:15px;line-height:15px;color:#ffffff;width:38px;margin-left:-19.0px;text-align:center;">1rd</div>
<div class="t" style="left:1279px;top:344.00px;font-size:15px;line-height:15px;color:#ffffff;width:38px;margin-left:-19.0px;text-align:center;">2nd</div>
<div class="t" style="left:1317px;top:344.00px;font-size:15px;line-height:15px;color:#ffffff;width:38px;margin-left:-19.0px;text-align:center;">3rd</div>
<div class="r" style="left:1335px;top:283px;width:1px;height:83px;background:#56578a;"></div>
<div class="r" style="left:22px;top:336px;width:287px;height:30px;background:#5c5b8a;"></div>
<div class="t" style="left:58.5px;top:344.10px;font-size:15px;line-height:15px;color:#fff;width:30px;margin-left:-30px;text-align:right;">#</div>
<div class="t" style="left:88px;top:344.10px;font-size:15px;line-height:15px;color:#fff;letter-spacing:0.25px;">Students Name</div>
<div class="r" style="left:67px;top:348px;width:17px;height:17px;background:linear-gradient(180deg,#ffffff,#e9ebef);border:1px solid #c5c8cf;box-sizing:border-box;"></div>
<svg class="r" style="left:71px;top:354.6px;" width="9" height="6" viewBox="0 0 9 6"><path d="M0.5 0.5h8L4.5 5z" fill="#555"/></svg>
<div class="r" style="left:292px;top:348px;width:17px;height:17px;background:linear-gradient(180deg,#ffffff,#e9ebef);border:1px solid #c5c8cf;box-sizing:border-box;"></div>
<svg class="r" style="left:296px;top:354.6px;" width="9" height="6" viewBox="0 0 9 6"><path d="M0.5 0.5h8L4.5 5z" fill="#555"/></svg>
<div class="r" style="left:22px;top:366px;width:287px;height:340px;background:#d4d6e3;"></div>
<div class="t" style="left:53.6px;top:374.30px;font-size:15px;line-height:15px;color:#111;width:40px;margin-left:-20.0px;text-align:center;">1</div>
<div class="t" style="left:88px;top:374.30px;font-size:15px;line-height:15px;color:#111;">Patrick Swayze</div>
<div class="t" style="left:53.6px;top:404.30px;font-size:15px;line-height:15px;color:#111;width:40px;margin-left:-20.0px;text-align:center;">2</div>
<div class="t" style="left:88px;top:404.30px;font-size:15px;line-height:15px;color:#111;">Benicio Del Toro</div>
<div class="t" style="left:53.6px;top:434.30px;font-size:15px;line-height:15px;color:#111;width:40px;margin-left:-20.0px;text-align:center;">3</div>
<div class="t" style="left:88px;top:434.30px;font-size:15px;line-height:15px;color:#111;">Harvey Kietel</div>
<div class="t" style="left:53.6px;top:464.30px;font-size:15px;line-height:15px;color:#111;width:40px;margin-left:-20.0px;text-align:center;">4</div>
<div class="t" style="left:88px;top:464.30px;font-size:15px;line-height:15px;color:#111;">Ed Harris</div>
<div class="t" style="left:53.6px;top:494.30px;font-size:15px;line-height:15px;color:#111;width:40px;margin-left:-20.0px;text-align:center;">5</div>
<div class="t" style="left:88px;top:494.30px;font-size:15px;line-height:15px;color:#111;">Charles Laughton</div>
<div class="t" style="left:53.6px;top:524.30px;font-size:15px;line-height:15px;color:#111;width:40px;margin-left:-20.0px;text-align:center;">6</div>
<div class="t" style="left:88px;top:524.30px;font-size:15px;line-height:15px;color:#111;">James Caan</div>
<div class="t" style="left:53.6px;top:554.30px;font-size:15px;line-height:15px;color:#111;width:40px;margin-left:-20.0px;text-align:center;">7</div>
<div class="t" style="left:88px;top:554.30px;font-size:15px;line-height:15px;color:#111;">Robert Downey Jr.</div>
<div class="t" style="left:53.6px;top:584.30px;font-size:15px;line-height:15px;color:#111;width:40px;margin-left:-20.0px;text-align:center;">8</div>
<div class="t" style="left:88px;top:584.30px;font-size:15px;line-height:15px;color:#111;">Alec Guiness</div>
<div class="t" style="left:53.6px;top:614.30px;font-size:15px;line-height:15px;color:#111;width:40px;margin-left:-20.0px;text-align:center;">9</div>
<div class="t" style="left:88px;top:614.30px;font-size:15px;line-height:15px;color:#111;">Viggo Mortensen</div>
<div class="t" style="left:53.6px;top:644.30px;font-size:15px;line-height:15px;color:#111;width:40px;margin-left:-20.0px;text-align:center;">10</div>
<div class="t" style="left:88px;top:644.30px;font-size:15px;line-height:15px;color:#111;">Kylian Mbappe</div>
<div class="t" style="left:53.6px;top:674.30px;font-size:15px;line-height:15px;color:#111;width:40px;margin-left:-20.0px;text-align:center;">11</div>
<div class="t" style="left:88px;top:674.30px;font-size:15px;line-height:15px;color:#111;">Jessica Alba</div>
<div class="t" style="left:53.6px;top:704.30px;font-size:15px;line-height:15px;color:#111;width:40px;margin-left:-20.0px;text-align:center;">12</div>
<div class="t" style="left:88px;top:704.30px;font-size:15px;line-height:15px;color:#111;">Will Smith</div>
<div class="r" style="left:22px;top:396px;width:287px;height:1px;background:#5c5b8a;"></div>
<div class="r" style="left:309px;top:396px;width:1026px;height:1px;background:#d9d9e7;"></div>
<div class="r" style="left:22px;top:426px;width:287px;height:1px;background:#5c5b8a;"></div>
<div class="r" style="left:309px;top:426px;width:1026px;height:1px;background:#d9d9e7;"></div>
<div class="r" style="left:22px;top:456px;width:287px;height:1px;background:#5c5b8a;"></div>
<div class="r" style="left:309px;top:456px;width:1026px;height:1px;background:#d9d9e7;"></div>
<div class="r" style="left:22px;top:486px;width:287px;height:1px;background:#5c5b8a;"></div>
<div class="r" style="left:309px;top:486px;width:1026px;height:1px;background:#d9d9e7;"></div>
<div class="r" style="left:22px;top:516px;width:287px;height:1px;background:#5c5b8a;"></div>
<div class="r" style="left:309px;top:516px;width:1026px;height:1px;background:#d9d9e7;"></div>
<div class="r" style="left:22px;top:546px;width:287px;height:1px;background:#5c5b8a;"></div>
<div class="r" style="left:309px;top:546px;width:1026px;height:1px;background:#d9d9e7;"></div>
<div class="r" style="left:22px;top:576px;width:287px;height:1px;background:#5c5b8a;"></div>
<div class="r" style="left:309px;top:576px;width:1026px;height:1px;background:#d9d9e7;"></div>
<div class="r" style="left:22px;top:606px;width:287px;height:1px;background:#5c5b8a;"></div>
<div class="r" style="left:309px;top:606px;width:1026px;height:1px;background:#d9d9e7;"></div>
<div class="r" style="left:22px;top:636px;width:287px;height:1px;background:#5c5b8a;"></div>
<div class="r" style="left:309px;top:636px;width:1026px;height:1px;background:#d9d9e7;"></div>
<div class="r" style="left:22px;top:666px;width:287px;height:1px;background:#5c5b8a;"></div>
<div class="r" style="left:309px;top:666px;width:1026px;height:1px;background:#d9d9e7;"></div>
<div class="r" style="left:22px;top:696px;width:287px;height:1px;background:#5c5b8a;"></div>
<div class="r" style="left:309px;top:696px;width:1026px;height:1px;background:#d9d9e7;"></div>
<div class="r" style="left:22px;top:366px;width:1px;height:340px;background:#5c5b8a;"></div>
<div class="r" style="left:84px;top:366px;width:1px;height:340px;background:#5c5b8a;"></div>
<div class="r" style="left:309px;top:366px;width:1px;height:340px;background:#5c5b8a;"></div>
<div class="r" style="left:347px;top:366px;width:1px;height:340px;background:#d9d9e7;"></div>
<div class="r" style="left:385px;top:366px;width:1px;height:340px;background:#d9d9e7;"></div>
<div class="r" style="left:423px;top:366px;width:1px;height:340px;background:#5c5b8a;"></div>
<div class="r" style="left:461px;top:366px;width:1px;height:340px;background:#d9d9e7;"></div>
<div class="r" style="left:499px;top:366px;width:1px;height:340px;background:#d9d9e7;"></div>
<div class="r" style="left:537px;top:366px;width:1px;height:340px;background:#5c5b8a;"></div>
<div class="r" style="left:575px;top:366px;width:1px;height:340px;background:#d9d9e7;"></div>
<div class="r" style="left:613px;top:366px;width:1px;height:340px;background:#d9d9e7;"></div>
<div class="r" style="left:651px;top:366px;width:1px;height:340px;background:#5c5b8a;"></div>
<div class="r" style="left:689px;top:366px;width:1px;height:340px;background:#d9d9e7;"></div>
<div class="r" style="left:727px;top:366px;width:1px;height:340px;background:#d9d9e7;"></div>
<div class="r" style="left:765px;top:366px;width:1px;height:340px;background:#5c5b8a;"></div>
<div class="r" style="left:803px;top:366px;width:1px;height:340px;background:#d9d9e7;"></div>
<div class="r" style="left:841px;top:366px;width:1px;height:340px;background:#d9d9e7;"></div>
<div class="r" style="left:879px;top:366px;width:1px;height:340px;background:#5c5b8a;"></div>
<div class="r" style="left:917px;top:366px;width:1px;height:340px;background:#d9d9e7;"></div>
<div class="r" style="left:955px;top:366px;width:1px;height:340px;background:#d9d9e7;"></div>
<div class="r" style="left:993px;top:366px;width:1px;height:340px;background:#5c5b8a;"></div>
<div class="r" style="left:1031px;top:366px;width:1px;height:340px;background:#d9d9e7;"></div>
<div class="r" style="left:1069px;top:366px;width:1px;height:340px;background:#d9d9e7;"></div>
<div class="r" style="left:1107px;top:366px;width:1px;height:340px;background:#5c5b8a;"></div>
<div class="r" style="left:1145px;top:366px;width:1px;height:340px;background:#d9d9e7;"></div>
<div class="r" style="left:1183px;top:366px;width:1px;height:340px;background:#d9d9e7;"></div>
<div class="r" style="left:1221px;top:366px;width:1px;height:340px;background:#5c5b8a;"></div>
<div class="r" style="left:1259px;top:366px;width:1px;height:340px;background:#d9d9e7;"></div>
<div class="r" style="left:1297px;top:366px;width:1px;height:340px;background:#d9d9e7;"></div>
<div class="r" style="left:1335px;top:366px;width:1px;height:340px;background:#5c5b8a;"></div>
<div class="r" style="left:0px;top:366px;width:1365px;height:1px;background:#9b9b9b;"></div>
<div class="r" style="left:1365px;top:178px;width:2px;height:522px;background:#ffffff;"></div>
</body></html>
